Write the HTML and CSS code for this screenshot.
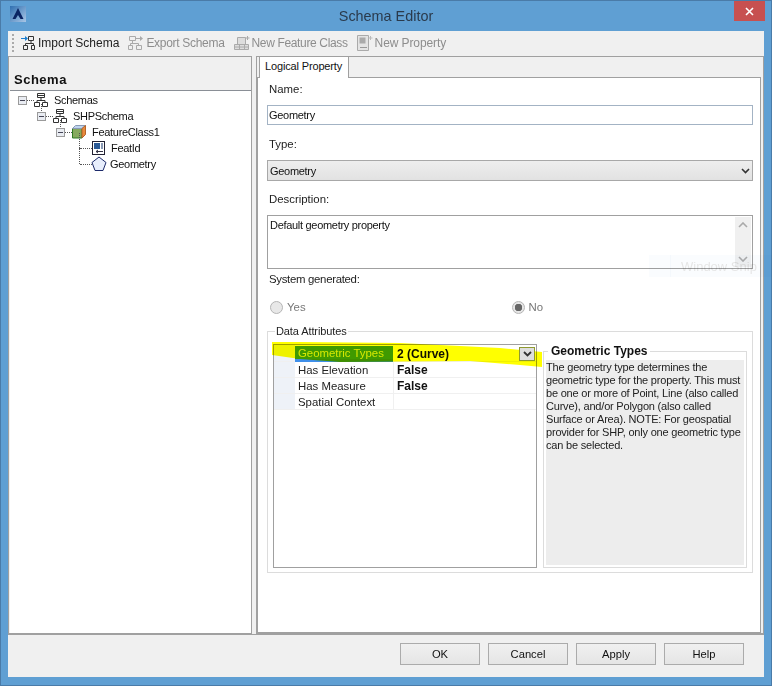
FILE: index.html
```html
<!DOCTYPE html>
<html>
<head>
<meta charset="utf-8">
<title>Schema Editor</title>
<link rel="stylesheet" href="styles.css">
</head>
<body>
<div class="window">
  <header class="titlebar">
    <svg class="app-icon" width="16" height="16" viewBox="0 0 16 16"><defs><linearGradient id="ag" x1="0" y1="0" x2="1" y2="1"><stop offset="0" stop-color="#2f6fb0"/><stop offset="1" stop-color="#a9c6e6"/></linearGradient></defs><rect width="16" height="16" fill="url(#ag)"/><path d="M8 2 L13.5 13 H10.5 L8 9 L5.5 13 H2.5 Z" fill="#0a2463"/></svg>
    <div class="title">Schema Editor</div>
    <div class="close"><svg width="9" height="9" viewBox="0 0 9 9"><path d="M1 1l7 7M8 1l-7 7" stroke="#fff" stroke-width="1.600"/></svg></div>
  </header>
  <div class="client">
    <nav class="toolbar">
      <span class="grip"></span>
      <span class="tool t-import"><svg class="ti" viewBox="0 0 16 16"><path d="M8.5 1.5h5v4h-5zM11 5.5v3M5.5 8.500h8M5.500 8.500v2M13.500 8.500v2M3.500 10.500h4v4h-4zM11.500 10.500h3v4h-3z" fill="none" stroke="#333"/><path d="M1 3h4V1l3 2.500L5 6V4H1z" fill="#1c7fd0"/></svg>Import Schema</span>
      <span class="tool off t-export"><svg class="ti" viewBox="0 0 16 16"><path d="M1.500 1.500h6v4h-6zM4.500 5.500v3M2.500 8.500h8M2.500 8.500v2M10.500 8.500v2M.5 10.500h4v4h-4zM8.500 10.500h5v4h-5z" fill="none" stroke="#aaa"/><path d="M8 3h4V1l3 2.500L12 6V4H8z" fill="#aaa"/></svg>Export Schema</span>
      <span class="tool off t-feature"><svg class="ti" viewBox="0 0 16 16"><path d="M.5 9.500h14v5H.5zM5.500 9.500v5M10.500 9.500v5M.5 12h14M3.500 2.500h8v7h-8z" fill="#ddd" stroke="#aaa"/><path d="M13.500 1v4M11.500 3h4" stroke="#aaa"/></svg>New Feature Class</span>
      <span class="tool off t-prop"><svg class="ti" viewBox="0 0 16 16"><path d="M.5 .5h11v15H.5z" fill="#e4e4e4" stroke="#aaa"/><path d="M2.500 2.500h6v6h-6z" fill="#aaa"/><path d="M3 12.500h7" stroke="#999"/><path d="M13.500 1v4M11.500 3h4" stroke="#bbb"/></svg>New Property</span>
    </nav>
    <div class="main">
      <aside class="left">
        <h2 class="left-head">Schema</h2>
        <div class="tree">
          <div class="node n0"><span class="exp"></span><span class="dots"></span><svg class="ni" viewBox="0 0 14 14"><use href="#net"/></svg><span class="nl">Schemas</span></div>
          <div class="node n1"><span class="exp"></span><span class="dots"></span><svg class="ni" viewBox="0 0 14 14"><use href="#net"/></svg><span class="nl">SHPSchema</span></div>
          <div class="node n2"><span class="exp"></span><span class="dots"></span><svg class="ni" viewBox="0 0 14 14"><path d="M.5 3.500h9.500v9.500H.5z" fill="#86a95e" stroke="#2f7a22"/><path d="M.5 3.500l3-3h10l-3.500 3z" fill="#bcd3ee" stroke="#8a9ab5"/><path d="M10 3.500l3.500-3v9l-3.500 3.500z" fill="#e98a3c" stroke="#b5652a"/></svg><span class="nl">FeatureClass1</span></div>
          <div class="node n3"><span class="hdots"></span><svg class="ni" viewBox="0 0 14 14"><rect x=".5" y=".5" width="12" height="13" fill="#fff" stroke="#223"/><rect x="2" y="2" width="6" height="6" fill="#2a5a96"/><rect x="9" y="2" width="2" height="6" fill="#8a9ab5"/><path d="M4 10.500h7M4 10.500l2-1.500M4 10.500l2 1.500" stroke="#334" fill="none"/></svg><span class="nl">FeatId</span></div>
          <div class="node n4"><span class="hdots"></span><svg class="ni big" viewBox="0 0 16 16"><path d="M8 1l7 5.500-3 8H4l-3-8z" fill="#e8eefc" stroke="#1d2a6a"/></svg><span class="nl">Geometry</span></div>
        </div>
        <svg width="0" height="0" class="defs"><defs><g id="net" fill="#fff" stroke="#333"><path d="M3.500 .5h7v4h-7zM3.500 2.500h7M.5 9.500h5v4h-5zM8.500 9.500h5v4h-5zM7 4.500v3M3 9.500v-2h8v2"/></g></defs></svg>
      </aside>
      <section class="right">
        <div class="tabs"><div class="tab">Logical Property</div></div>
        <div class="page">
          <label class="lbl lbl-name">Name:</label>
          <div class="input">Geometry</div>
          <label class="lbl lbl-type">Type:</label>
          <div class="select"><span>Geometry</span><svg width="9" height="6" viewBox="0 0 9 6"><path d="M1 1l3.500 3.500L8 1" fill="none" stroke="#333" stroke-width="1.600"/></svg></div>
          <label class="lbl lbl-desc">Description:</label>
          <div class="area">
            <span>Default geometry property</span>
            <div class="sb"><svg width="10" height="6" viewBox="0 0 10 6"><path d="M1 5l4-4 4 4" fill="none" stroke="#aaa" stroke-width="1.600"/></svg><svg width="10" height="6" viewBox="0 0 10 6"><path d="M1 1l4 4 4-4" fill="none" stroke="#aaa" stroke-width="1.600"/></svg></div>
          </div>
          <label class="lbl lbl-sys">System generated:</label>
          <div class="radios">
            <span class="radio-item"><i class="radio"></i>Yes</span>
            <span class="radio-item"><i class="radio on"></i>No</span>
          </div>
          <fieldset class="group">
            <legend>Data Attributes</legend>
            <div class="group-row">
              <div class="grid">
                <div class="row sel"><div class="gut"></div><div class="key"><span>Geometric Types</span></div><div class="val">2 (Curve)</div><div class="drop"><svg width="9" height="6" viewBox="0 0 9 6"><path d="M1 1l3.500 3.500L8 1" fill="none" stroke="#333" stroke-width="1.800"/></svg></div></div>
                <div class="row"><div class="gut"></div><div class="key">Has Elevation</div><div class="val">False</div></div>
                <div class="row"><div class="gut"></div><div class="key">Has Measure</div><div class="val">False</div></div>
                <div class="row"><div class="gut"></div><div class="key">Spatial Context</div><div class="val"></div></div>
              </div>
              <fieldset class="help">
                <legend>Geometric Types</legend>
                <div class="help-body">The geometry type determines the<br>geometric type for the property. This must<br>be one or more of Point, Line (also called<br>Curve), and/or Polygon (also called<br>Surface or Area). NOTE: For geospatial<br>provider for SHP, only one geometric type<br>can be selected.</div>
              </fieldset>
            </div>
          </fieldset>
        </div>
      </section>
    </div>
    <footer class="buttons">
      <button class="btn">OK</button>
      <button class="btn">Cancel</button>
      <button class="btn">Apply</button>
      <button class="btn">Help</button>
    </footer>
  </div>
  <div class="snip"><span class="snip-ic"></span><span class="snip-t">Window Snip</span></div>
  <svg class="marker" width="772" height="686" viewBox="0 0 772 686"><path d="M272 342 L300 342 L400 343 L440 345 L500 348 L542 352 L542 367 L520 365 L470 361 L340 362 L300 359 L272 355 Z" fill="#ffff00"/></svg>
</div>
</body>
</html>
```
FILE: styles.css
```css
* { box-sizing: border-box; }
html, body { margin: 0; padding: 0; }
body { width: 772px; height: 686px; overflow: hidden; font: 11px "Liberation Sans", Arial, sans-serif; color: #111; }
.window { position: relative; width: 772px; height: 686px; background: #5f9fd3; border: 1px solid #4a7ba8; padding: 0 7px 8px; display: flex; flex-direction: column; }
.titlebar { height: 30px; display: flex; align-items: center; position: relative; flex: none; }
.app-icon { margin: 0 0 0 2px; position: relative; top: -2px; }
.title { position: absolute; left: 0; right: 0; top: 7px; text-align: center; font-size: 14.400px; color: #2a3a4c; }
.close { position: absolute; right: -1px; top: 0; width: 31px; height: 20px; background: #c75050; display: flex; align-items: center; justify-content: center; }
.client { flex: 1; background: #f0f0f0; display: flex; flex-direction: column; min-height: 0; }
.toolbar { height: 24px; flex: none; display: flex; align-items: center; gap: 9px; padding-left: 4px; background: #f0f0f0; color: #222; font-size: 12px; }
.grip { width: 2px; height: 18px; margin-right: -3px; background-image: linear-gradient(#aaa 50%, transparent 50%); background-size: 2px 4px; }
.tool { display: flex; align-items: center; gap: 2px; }
.tool.off { color: #8d8d8d; }
.t-export { letter-spacing: -.3px; }
.t-feature { letter-spacing: -.35px; }
.t-prop { letter-spacing: -.1px; }
.ti { width: 16px; height: 16px; }
.main { flex: 1; display: flex; min-height: 0; }
.left { width: 244px; height: 578px; margin-top: 1px; border: 1px solid #a0a0a0; background: #f0f0f0; display: flex; flex-direction: column; position: relative; }
.left-head { margin: 0; height: 33px; padding: 15px 0 0 5px; font-size: 13px; font-weight: bold; line-height: 16px; letter-spacing: .5px; }
.tree { flex: 1; border-top: 1px solid #8a8f96; background: #fff; padding-top: 1px; margin-left: 1px; letter-spacing: -.3px; }
.defs { position: absolute; }
.node { height: 16px; display: flex; align-items: center; position: relative; }
.n0 { padding-left: 8px; }
.n1 { padding-left: 27px; }
.n2 { padding-left: 46px; }
.n3, .n4 { padding-left: 70px; }
.n1::before, .n2::before, .n3::before, .n4::before { content: ""; position: absolute; border-left: 1px dotted #555; }
.n1::before { left: 31px; top: -4px; height: 7px; }
.n2::before { left: 50px; top: -4px; height: 7px; }
.n3::before { left: 69px; top: -7px; height: 15px; }
.n4::before { left: 69px; top: -8px; height: 16px; }
.exp { width: 9px; height: 9px; border: 1px solid #9a9a9a; background: linear-gradient(#445,#445) center/5px 1px no-repeat, #e9ecf2; flex: none; }
.dots { width: 7px; border-top: 1px dotted #555; flex: none; }
.hdots { width: 12px; border-top: 1px dotted #555; flex: none; }
.ni { width: 14px; height: 14px; flex: none; }
.ni.big { width: 16px; height: 16px; margin-left: -1px; }
.nl { margin-left: 6px; color: #111; }
.n3 .nl { margin-left: 5px; }
.n4 .nl { margin-left: 3px; }
.right { width: 508px; height: 578px; margin: 1px 0 0 4px; border: 1px solid #a0a0a0; display: flex; flex-direction: column; background: #f0f0f0; }
.tabs { height: 20px; flex: none; padding-left: 2px; position: relative; }
.tab { width: 90px; height: 21px; background: #fff; border: 1px solid #a0a0a0; border-bottom: 0; border-top: 0; padding: 3px 0 0 5px; position: relative; z-index: 1; white-space: nowrap; letter-spacing: -.15px; }
.page { flex: 1; width: 504px; background: #fff; border: 1px solid #a0a0a0; padding: 0 7px 0 9px; display: flex; flex-direction: column; }
.lbl { display: block; line-height: 14px; color: #222; font-size: 11.400px; padding-left: 2px; }
.lbl-name { margin-top: 4px; }
.input { height: 20px; margin-top: 9px; border: 1px solid #a3b3c4; padding: 2px 1px; line-height: 14px; letter-spacing: -.3px; }
.lbl-type { margin-top: 12px; }
.select { height: 21px; margin-top: 9px; border: 1px solid #a8a8a8; background: linear-gradient(#eeeeee, #e2e2e2); padding: 0 2px; line-height: 14px; display: flex; justify-content: space-between; align-items: center; letter-spacing: -.3px; }
.lbl-desc { margin-top: 11px; }
.area { height: 54px; margin-top: 9px; border: 1px solid #a0a0a0; padding: 2px 2px; position: relative; line-height: 14px; letter-spacing: -.3px; }
.sb { position: absolute; right: 1px; top: 1px; bottom: 1px; width: 16px; background: #f0f0f0; display: flex; flex-direction: column; justify-content: space-between; align-items: center; padding: 5px 0; }
.lbl-sys { margin-top: 3px; letter-spacing: -.3px; }
.radios { display: flex; margin-top: 14px; height: 14px; padding-left: 3px; color: #777; font-size: 11.400px; }
.radio-item { width: 243px; display: flex; align-items: center; gap: 4px; }
.radio { width: 13px; height: 13px; border-radius: 50%; border: 1px solid #b5b5b5; background: #e8e8e8; display: block; }
.radio.on { background: radial-gradient(circle, #666 0 3.500px, #e6e6e6 4px); }
.group { margin: 10px 0 0; padding: 6px 3px 0 5px; height: 249px; border: 1px solid #dcdcdc; min-width: 0; }
.group > legend { padding: 0 1px; margin-left: 2px; line-height: 14px; color: #222; letter-spacing: -.1px; }
.group-row { display: flex; gap: 6px; height: 224px; }
.grid { width: 264px; border: 1px solid #a0a0a0; height: 224px; padding-top: 1px; font-size: 11.400px; flex: none; }
.row { height: 16px; display: flex; border-bottom: 1px solid #f0f0f0; position: relative; }
.gut { width: 21px; background: #eef2f8; }
.key { width: 99px; padding-left: 3px; line-height: 17px; color: #222; border-right: 1px solid #f0f0f0; }
.val { flex: 1; padding-left: 3px; font-weight: bold; line-height: 17px; font-size: 12px; }
.row.sel { margin-top: -1px; height: 17px; }
.sel .key { background: #3f9a00; color: #d7e84a; border-bottom: 3px solid #3f8fea; height: 16px; width: 98px; margin-top: 1px; border-right: 0; line-height: 15px; margin-right: 1px; }
.sel .val { padding-top: 1px; }
.drop { position: absolute; right: 1px; top: 2px; width: 16px; height: 14px; border: 1px solid #8f9a30; background: #dedede; display: flex; align-items: center; justify-content: center; z-index: 3; }
.help { width: 204px; height: 224px; margin: 0; border: 1px solid #dcdcdc; padding: 2px 2px 2px; min-width: 0; flex: none; }
.help legend { font-weight: bold; font-size: 12px; padding: 0 3px; margin-left: 2px; line-height: 14px; }
.help-body { background: #ededed; height: 205px; padding: 1px 0 0; line-height: 13px; color: #222; letter-spacing: -.2px; white-space: nowrap; }
.buttons { height: 43px; flex: none; display: flex; gap: 8px; justify-content: flex-end; padding: 8px 20px 0 0; border-top: 1px solid #a0a0a0; }
.btn { width: 80px; height: 22px; border: 1px solid #ababab; background: linear-gradient(#f0f0f0, #e5e5e5); font: 11.200px "Liberation Sans", Arial, sans-serif; color: #111; padding: 0; border-radius: 0; }
.snip { position: absolute; left: 648px; top: 254px; width: 123px; height: 22px; display: flex; opacity: .3; background: #eef5fc; mix-blend-mode: multiply; pointer-events: none; }
.snip-ic { width: 22px; border-right: 1px solid #dbe8f5; }
.snip-t { padding: 4px 0 0 10px; color: #aaa; font-size: 13px; }
.marker { position: absolute; left: -1px; top: -1px; mix-blend-mode: multiply; pointer-events: none; }
```
